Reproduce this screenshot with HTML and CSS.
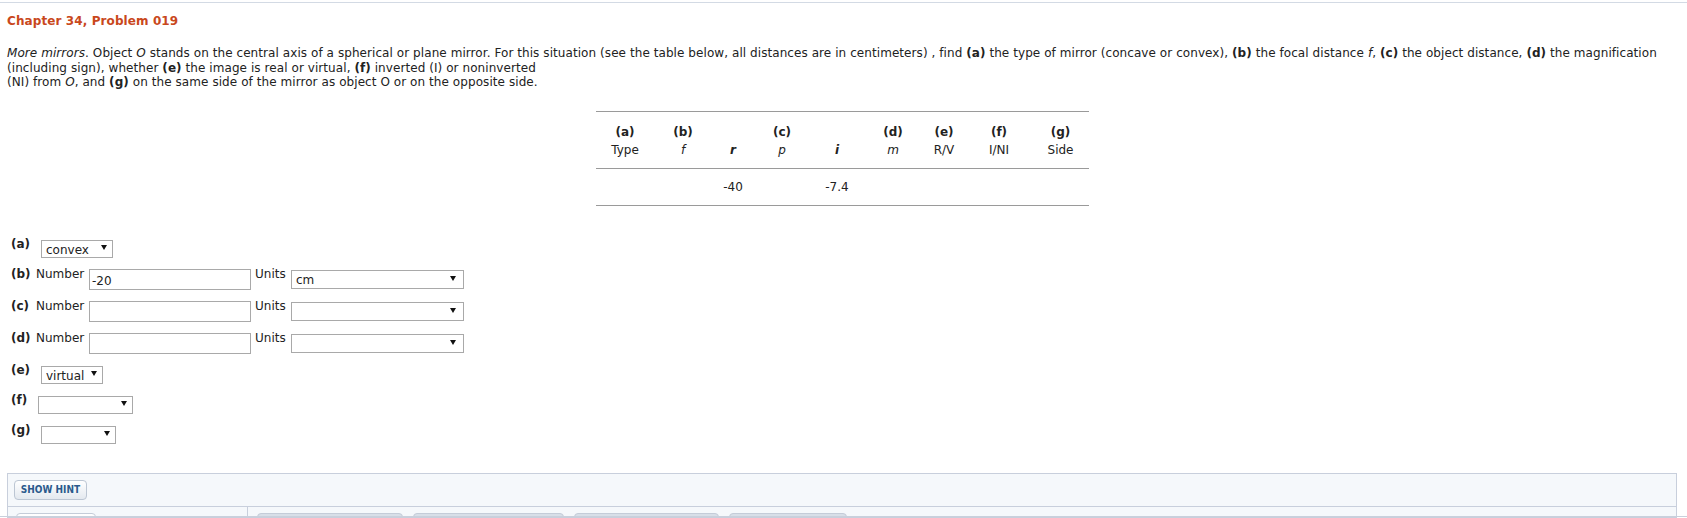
FILE: index.html
```html
<!DOCTYPE html>
<html lang="en">
<head>
    <meta charset="UTF-8">
    <title>Chapter 34, Problem 019</title>
    <link rel="stylesheet" href="styles.css">
</head>
<body>
    <div class="topline"></div>
    <div class="page">
        <h2 class="title">Chapter 34, Problem 019</h2>

        <p class="question"><i>More mirrors</i>. Object <i>O</i> stands on the central axis of a spherical or plane mirror. For this situation (see the table below, all distances are in centimeters) , find <b>(a)</b> the type of mirror (concave or convex), <b>(b)</b> the focal distance <i>f</i>, <b>(c)</b> the object distance, <b>(d)</b> the magnification<br>(including sign), whether <b>(e)</b> the image is real or virtual, <b>(f)</b> inverted (I) or noninverted<br>(NI) from <i>O</i>, and <b>(g)</b> on the same side of the mirror as object O or on the opposite side.</p>

        <!-- given values -->
        <table class="data">
            <colgroup>
                <col style="width: 58px"><col style="width: 58px"><col style="width: 42px">
                <col style="width: 56px"><col style="width: 54px"><col style="width: 58px">
                <col style="width: 44px"><col style="width: 66px"><col style="width: 57px">
            </colgroup>
            <thead>
                <tr>
                    <th><b>(a)</b><br>Type</th>
                    <th><b>(b)</b><br><i>f</i></th>
                    <th><b><i>r</i></b></th>
                    <th><b>(c)</b><br><i>p</i></th>
                    <th><b><i>i</i></b></th>
                    <th><b>(d)</b><br><i>m</i></th>
                    <th><b>(e)</b><br>R/V</th>
                    <th><b>(f)</b><br>I/NI</th>
                    <th><b>(g)</b><br>Side</th>
                </tr>
            </thead>
            <tbody>
                <tr>
                    <td></td><td></td><td>-40</td><td></td><td>-7.4</td><td></td><td></td><td></td><td></td>
                </tr>
            </tbody>
        </table>

        <!-- answer fields -->
        <div class="answers">
            <div class="row">
                <b class="part">(a)</b>
                <span class="sel" style="width: 72px"><select><option>convex</option><option>concave</option><option>plane</option></select></span>
            </div>
            <div class="row">
                <b class="part tight">(b)</b>
                <span class="word">Number</span>
                <input class="num" type="text" value="-20">
                <span class="word units">Units</span>
                <span class="sel tall" style="width: 173px"><select><option>cm</option><option>m</option></select></span>
            </div>
            <div class="row">
                <b class="part tight">(c)</b>
                <span class="word">Number</span>
                <input class="num" type="text" value="">
                <span class="word units">Units</span>
                <span class="sel tall" style="width: 173px"><select><option></option><option>cm</option></select></span>
            </div>
            <div class="row">
                <b class="part tight">(d)</b>
                <span class="word">Number</span>
                <input class="num" type="text" value="">
                <span class="word units">Units</span>
                <span class="sel tall" style="width: 173px"><select><option></option><option>No units</option></select></span>
            </div>
            <div class="row">
                <b class="part">(e)</b>
                <span class="sel" style="width: 62px"><select><option>virtual</option><option>real</option></select></span>
            </div>
            <div class="row">
                <b class="part short">(f)</b>
                <span class="sel" style="width: 95px"><select><option></option><option>inverted</option><option>noninverted</option></select></span>
            </div>
            <div class="row">
                <b class="part">(g)</b>
                <span class="sel" style="width: 75px"><select><option></option><option>same</option><option>opposite</option></select></span>
            </div>
        </div>

        <div class="hint-panel">
            <div class="hint-row">
                <button class="hint-btn">SHOW HINT</button>
            </div>
            <div class="tool-row">
                <div class="tool-left">
                    <button class="tool-btn light" style="width: 80px"></button>
                </div>
                <div class="tool-right">
                    <button class="tool-btn" style="width: 146px"></button>
                    <button class="tool-btn" style="width: 151px"></button>
                    <button class="tool-btn" style="width: 145px"></button>
                    <button class="tool-btn" style="width: 118px"></button>
                </div>
            </div>
        </div>
    </div>
</body>
</html>
```

FILE: styles.css
```css
body {
    margin: 0;
    font-family: "DejaVu Sans", sans-serif;
    font-size: 12px;
    color: #222;
    background-color: #fff;
}

body::after {
    content: "";
    position: fixed;
    left: 0;
    right: 0;
    top: 516px;
    border-top: 1px solid #c9d0dc;
}

.topline {
    margin-top: 2px;
    border-top: 1px solid #d3dae4;
}

.page {
    padding: 0 10px 0 7px;
}

.title {
    margin: 10px 0 0;
    font-size: 12px;
    line-height: 16px;
    color: #c9481c;
    letter-spacing: 0.1px;
}

.question {
    margin: 17px 0 0;
    line-height: 14.5px;
    letter-spacing: 0.07px;
}

/* table of given values */
.data {
    margin: 21px 0 0 589px;
    width: 493px;
    table-layout: fixed;
    border-collapse: collapse;
}

.data th {
    padding: 11px 0 9px;
    line-height: 18px;
    font-weight: normal;
    text-align: center;
    vertical-align: bottom;
    border-top: 1px solid #9a9a9a;
    border-bottom: 1px solid #9a9a9a;
}

.data td {
    padding: 9px 0;
    line-height: 18px;
    text-align: center;
    border-bottom: 1px solid #9a9a9a;
}

/* answer rows */
.answers {
    margin-top: 31px;
    padding-left: 4px;
    display: flex;
    flex-direction: column;
    gap: 9px;
}

.row {
    display: flex;
    align-items: flex-start;
    line-height: 14px;
    white-space: nowrap;
}

.part {
    width: 30px;
    flex: none;
}

.part.short {
    width: 27px;
}

.part.tight {
    width: 25px;
}

.word {
    width: 53px;
    flex: none;
}

.units {
    width: 36px;
    margin-left: 4px;
}

.num {
    margin: 2px 0 0;
    width: 162px;
    height: 21px;
    box-sizing: border-box;
    border: 1px solid #a9a9a9;
    padding: 3px 2px 0;
    font-family: inherit;
    font-size: 12px;
    color: #222;
}

.sel {
    position: relative;
    margin-top: 3px;
    height: 18px;
    flex: none;
}

.sel.tall {
    height: 19px;
}

.sel select {
    appearance: none;
    -webkit-appearance: none;
    width: 100%;
    height: 100%;
    box-sizing: border-box;
    border: 1px solid #a9a9a9;
    border-radius: 0;
    background: #fff;
    padding: 2px 0 0 4px;
    font-family: inherit;
    font-size: 12px;
    color: #222;
}

.sel::after {
    content: "";
    position: absolute;
    right: 6px;
    top: 5px;
    border-left: 3px solid transparent;
    border-right: 3px solid transparent;
    border-top: 5px solid #111;
    pointer-events: none;
}

.sel.tall::after {
    top: 6px;
    right: 8px;
}

/* hint box */
.hint-panel {
    margin-top: 29px;
    border: 1px solid #c8cfdc;
    background-color: #f5f8fb;
}

.hint-row {
    padding: 6px;
    border-bottom: 1px solid #c8cfdc;
}

.hint-btn {
    display: block;
    width: 73px;
    height: 20px;
    padding: 0;
    border: 1px solid #bcc6d3;
    border-radius: 4px;
    background: linear-gradient(#ffffff, #e4e9ef);
    font-family: "DejaVu Sans Condensed", "DejaVu Sans", sans-serif;
    font-size: 10px;
    font-weight: bold;
    color: #2b5a8c;
    cursor: pointer;
}

.tool-row {
    display: flex;
    height: 10px;
    overflow: hidden;
}

.tool-left {
    width: 240px;
    padding: 6px 0 0 8px;
    box-sizing: border-box;
    border-right: 1px solid #c8cfdc;
}

.tool-right {
    display: flex;
    gap: 10px;
    padding: 6px 0 0 9px;
}

.tool-btn {
    flex: none;
    height: 26px;
    border: 1px solid #c4ccd8;
    border-radius: 4px;
    background-color: #d8dfe8;
}

.tool-btn.light {
    background: linear-gradient(#ffffff, #eef1f5);
}
```
